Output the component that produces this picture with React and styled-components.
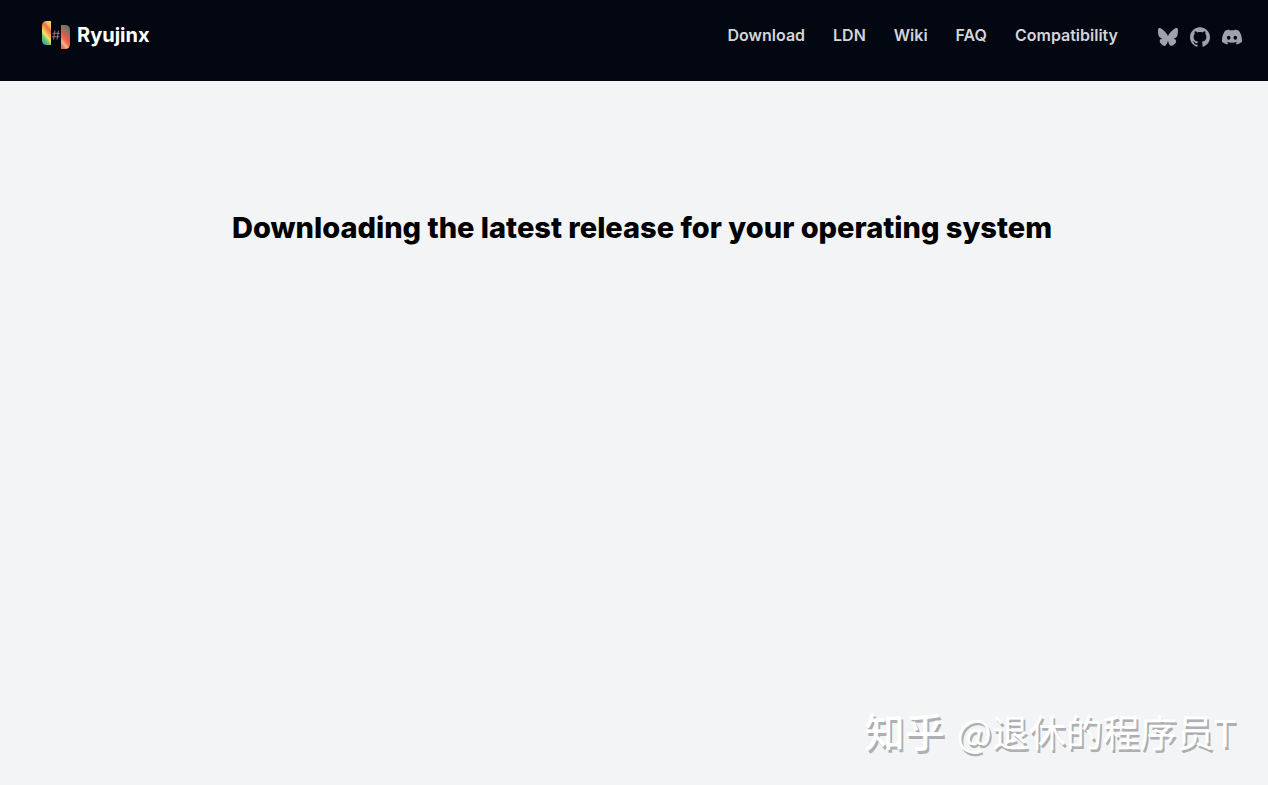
import React from 'react';
import styled, { createGlobalStyle } from 'styled-components';
import { SiBluesky, SiDiscord, SiGithub } from 'react-icons/si';

const navItems = ['Download', 'LDN', 'Wiki', 'FAQ', 'Compatibility'];

const socials = [
  { label: 'Bluesky', Icon: SiBluesky },
  { label: 'GitHub', Icon: SiGithub },
  { label: 'Discord', Icon: SiDiscord },
];

const LogoMark = () => (
  <svg width="28" height="28" viewBox="0 0 28 28" aria-hidden="true">
    <defs>
      <linearGradient id="leftFill" x1="9" y1="0" x2="-8" y2="14.3" gradientUnits="userSpaceOnUse">
        <stop offset="0" stopColor="#f3d65c" />
        <stop offset="0.16" stopColor="#f7c76a" />
        <stop offset="0.32" stopColor="#ee6a50" />
        <stop offset="0.44" stopColor="#f3a04f" />
        <stop offset="0.58" stopColor="#f6e468" />
        <stop offset="0.74" stopColor="#67c766" />
        <stop offset="0.9" stopColor="#3aa5cf" />
      </linearGradient>
      <linearGradient id="rightFill" x1="28" y1="4" x2="11" y2="18.3" gradientUnits="userSpaceOnUse">
        <stop offset="0.1" stopColor="#6f6a68" />
        <stop offset="0.32" stopColor="#8d7468" />
        <stop offset="0.46" stopColor="#e2574a" />
        <stop offset="0.62" stopColor="#ef6a50" />
        <stop offset="0.76" stopColor="#f2b886" />
        <stop offset="0.9" stopColor="#ee6a50" />
      </linearGradient>
    </defs>
    <path d="M5 0H9V24H5Q0 24 0 19V5Q0 0 5 0Z" fill="url(#leftFill)" />
    <path d="M19 4H23Q28 4 28 9V23Q28 28 23 28H19Z" fill="url(#rightFill)" />
    <path d="M13 9.5L11.5 18.5M16.5 9.5L15 18.5M10.4 12.3H17.8M9.9 15.7H17.3" fill="none" stroke="#b09080" strokeWidth="0.8" />
  </svg>
);

const App = () => {
  return (
    <>
      <GlobalStyle />
      <Page>
        <Header>
          <Brand href="#">
            <LogoMark />
            Ryujinx
          </Brand>
          <Nav>
            {navItems.map((item) => (
              <NavLink key={item} href="#">
                {item}
              </NavLink>
            ))}
            <Socials>
              {socials.map(({ label, Icon }) => (
                <SocialLink key={label} href="#" aria-label={label}>
                  <Icon size={20} />
                </SocialLink>
              ))}
            </Socials>
          </Nav>
        </Header>
        <Main>
          <Title>Downloading the latest release for your operating system</Title>
        </Main>
        <Credit>
          <Site>知乎</Site>
          <span>@退休的程序员T</span>
        </Credit>
      </Page>
    </>
  );
};

const GlobalStyle = createGlobalStyle`
  body {
    margin: 0;
    background-color: #f3f4f6;
    font-family: Inter, 'Noto Sans CJK SC', sans-serif;
  }
`;

const Page = styled.div`
  display: flex;
  flex-direction: column;
  min-height: 100vh;
`;

const Header = styled.header`
  display: flex;
  justify-content: space-between;
  align-items: flex-start;
  padding: 21px 26px 32px 42px;
  background-color: #030712;
`;

const Brand = styled.a`
  display: flex;
  align-items: center;
  gap: 7px;
  height: 28px;
  font-size: 20px;
  font-weight: 700;
  color: #ffffff;
  text-decoration: none;
`;

const Nav = styled.nav`
  display: flex;
  align-items: center;
  gap: 28px;
  height: 28px;
`;

const NavLink = styled.a`
  font-size: 16px;
  font-weight: 600;
  color: #d1d5db;
  text-decoration: none;
`;

const Socials = styled.div`
  display: flex;
  gap: 12px;
  margin-left: 12px;
  padding-top: 4px;
`;

const SocialLink = styled.a`
  display: flex;
  color: #9ca3af;
`;

const Main = styled.main`
  flex: 1;
  padding: 129px 16px 32px 32px;
`;

const Title = styled.h1`
  margin: 0;
  font-size: 29px;
  line-height: 36px;
  font-weight: 800;
  text-align: center;
  color: #000000;
`;

const Credit = styled.p`
  display: flex;
  align-items: baseline;
  align-self: flex-end;
  gap: 12px;
  margin: 0;
  padding: 0 32px 26px;
  font-family: 'Noto Sans CJK SC', sans-serif;
  font-size: 37px;
  line-height: 56px;
  color: #ffffff;
  text-shadow: 2px 3px 0 rgba(0, 0, 0, 0.3);
`;

const Site = styled.span`
  font-size: 40px;
  font-weight: 500;
`;

export default App;
